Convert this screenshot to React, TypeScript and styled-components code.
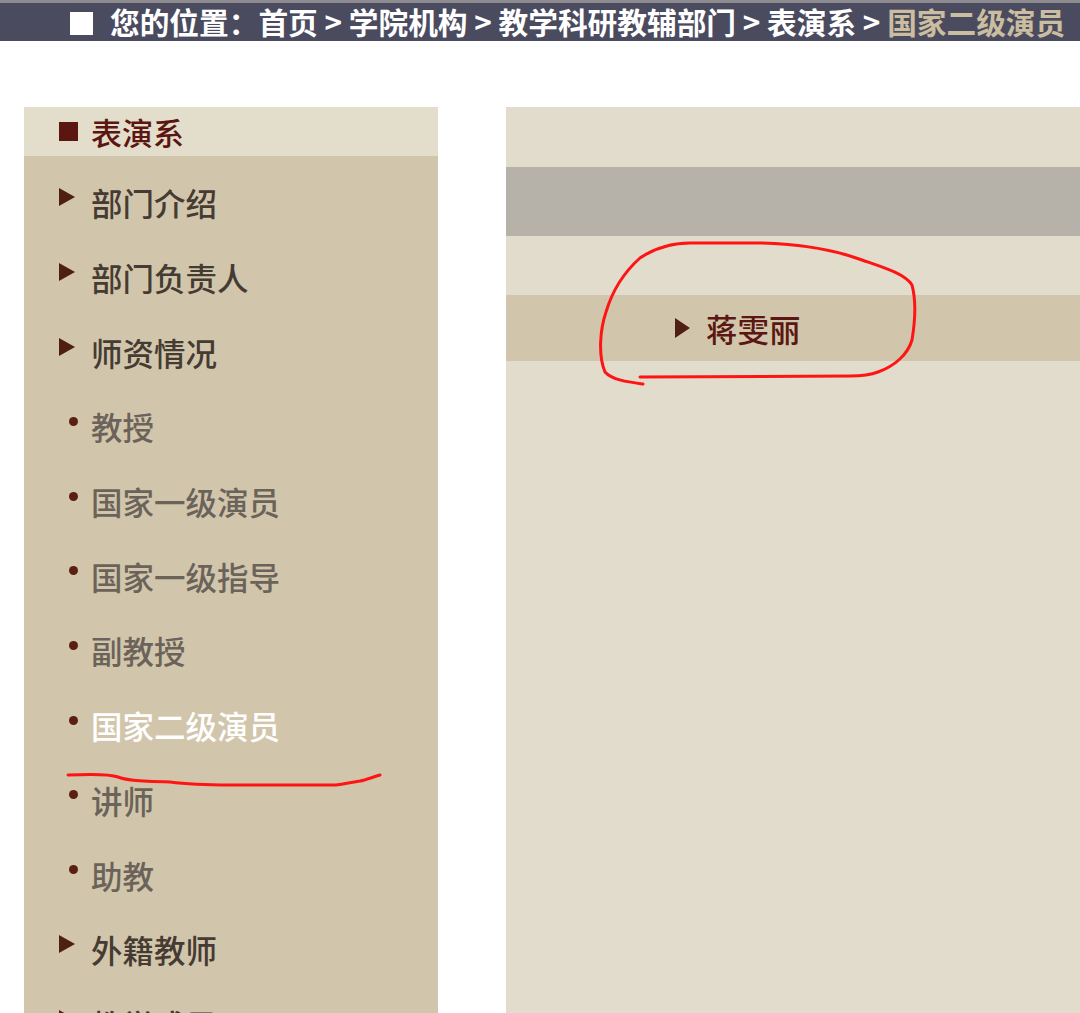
import * as React from 'react'
import styled, { createGlobalStyle } from 'styled-components'

// 表演系 / 国家二级演员 页面

const GlobalStyle = createGlobalStyle`
  html, body {
    margin: 0;
    padding: 0;
    background: #ffffff;
  }
  body {
    font-family: "Noto Sans CJK SC", "Noto Sans", "Liberation Sans", sans-serif;
  }
`

const Page = styled.div`
  position: relative;
  width: 1080px;
  height: 1013px;
  overflow: hidden;
  background: #ffffff;
`

const TopBar = styled.header`
  align-items: center;
  background: #4b4b5f;
  border-top: 3px solid #8d8b8f;
  box-sizing: border-box;
  color: #ffffff;
  display: flex;
  font-size: 29.7px;
  font-weight: 700;
  gap: 17px;
  height: 41px;
  padding-left: 70px;
  white-space: nowrap;
`

const WhiteSquare = styled.span`
  background: #ffffff;
  display: block;
  flex: none;
  height: 23px;
  margin-top: 2px;
  width: 23px;
`

const Crumb = styled.span<{ $current?: boolean }>`
  color: ${(p) => (p.$current ? '#cbbd9f' : '#ffffff')};
  line-height: 1;
`

const Main = styled.div`
  display: flex;
  gap: 68px;
  padding: 66px 0 0 24px;
`

const Sidebar = styled.aside`
  background: #d1c6ab;
  flex: none;
  width: 414px;
`

const SideTitle = styled.div`
  align-items: center;
  background: #e3ddcc;
  color: #5b1611;
  display: flex;
  font-size: 31px;
  font-weight: 500;
  gap: 13px;
  height: 49px;
  padding-left: 35px;
`

const TitleSquare = styled.span`
  background: #5b1611;
  display: block;
  height: 19px;
  width: 19px;
`

const MenuList = styled.ul`
  list-style: none;
  margin: 0;
  padding: 9px 0 0 0;
`

type Tone = 'top' | 'sub' | 'active'

const MenuRow = styled.li<{ $tone: Tone }>`
  align-items: center;
  color: ${(p) =>
    p.$tone === 'top' ? '#463b33' : p.$tone === 'active' ? '#ffffff' : '#6b635a'};
  display: flex;
  font-size: 31.5px;
  font-weight: 500;
  height: 74.7px;
  padding-left: 35px;
`

const MarkerBox = styled.span`
  align-items: center;
  display: flex;
  flex: none;
  height: 20px;
  margin-bottom: 10px;
  width: 32px;
`

const Triangle = styled.span<{ $w?: number; $h?: number }>`
  border-bottom: ${(p) => (p.$h ?? 18) / 2}px solid transparent;
  border-left: ${(p) => p.$w ?? 16}px solid #4f1f14;
  border-top: ${(p) => (p.$h ?? 18) / 2}px solid transparent;
  display: block;
  filter: blur(0.4px);
  height: 0;
  width: 0;
`

const Dot = styled.span`
  background: #5a1e12;
  border-radius: 50%;
  display: block;
  height: 9px;
  margin-left: 10px;
  width: 9px;
`

const Panel = styled.section`
  background: #e2dccc;
  display: flex;
  flex: 1;
  flex-direction: column;
`

const Band = styled.div<{ $h: number; $bg: string }>`
  background: ${(p) => p.$bg};
  flex: none;
  height: ${(p) => p.$h}px;
`

const EntryRow = styled.div`
  align-items: center;
  background: #d1c6ab;
  color: #5b1812;
  display: flex;
  font-size: 31.5px;
  font-weight: 500;
  gap: 16px;
  height: 66px;
  padding-left: 169px;
`

const Marks = styled.svg`
  left: 0;
  pointer-events: none;
  position: absolute;
  top: 0;
`

const crumbs = ['首页', '学院机构', '教学科研教辅部门', '表演系']

const menu: { label: string; tone: Tone; kind: 'tri' | 'dot' }[] = [
  { label: '部门介绍', tone: 'top', kind: 'tri' },
  { label: '部门负责人', tone: 'top', kind: 'tri' },
  { label: '师资情况', tone: 'top', kind: 'tri' },
  { label: '教授', tone: 'sub', kind: 'dot' },
  { label: '国家一级演员', tone: 'sub', kind: 'dot' },
  { label: '国家一级指导', tone: 'sub', kind: 'dot' },
  { label: '副教授', tone: 'sub', kind: 'dot' },
  { label: '国家二级演员', tone: 'active', kind: 'dot' },
  { label: '讲师', tone: 'sub', kind: 'dot' },
  { label: '助教', tone: 'sub', kind: 'dot' },
  { label: '外籍教师', tone: 'top', kind: 'tri' },
  { label: '教学成果', tone: 'top', kind: 'tri' },
]

export default function App() {
  return (
    <Page>
      <GlobalStyle />
      <TopBar>
        <WhiteSquare />
        <Crumb>
          您的位置：
          {crumbs.map((c) => (
            <React.Fragment key={c}>
              {c}
              {' > '}
            </React.Fragment>
          ))}
          <Crumb $current>国家二级演员</Crumb>
        </Crumb>
      </TopBar>
      <Main>
        <Sidebar>
          <SideTitle>
            <TitleSquare />
            表演系
          </SideTitle>
          <MenuList>
            {menu.map((m) => (
              <MenuRow key={m.label} $tone={m.tone}>
                <MarkerBox>{m.kind === 'tri' ? <Triangle /> : <Dot />}</MarkerBox>
                {m.label}
              </MenuRow>
            ))}
          </MenuList>
        </Sidebar>
        <Panel>
          <Band $h={60} $bg="#e2dccc" />
          <Band $h={69} $bg="#b6b2a9" />
          <Band $h={59} $bg="#e2dccc" />
          <EntryRow>
            <Triangle $w={15} $h={20} />
            蒋雯丽
          </EntryRow>
        </Panel>
      </Main>
      {/* 红色手绘标注 */}
      <Marks width="1080" height="1013" viewBox="0 0 1080 1013">
        <path
          d="M643 384 C628 382 612 380 605 372 C598 355 600 330 606 312 C612 292 622 274 640 258 C655 248 672 243 690 243 L760 243 C800 244 835 250 862 260 C885 268 905 274 912 285 C916 300 915 322 912 340 C908 354 895 366 878 372 C868 376 858 376 850 376 L640 377"
          fill="none"
          stroke="#ff1414"
          strokeWidth="3"
          strokeLinecap="round"
          strokeLinejoin="round"
        />
        <path
          d="M68 775 C90 774 110 774 118 777 C125 780 135 781 170 782 C185 784 200 785 230 785 L335 785 C345 784 352 782 360 781 C366 780 370 778 380 775"
          fill="none"
          stroke="#ff1414"
          strokeWidth="3"
          strokeLinecap="round"
        />
      </Marks>
    </Page>
  )
}
